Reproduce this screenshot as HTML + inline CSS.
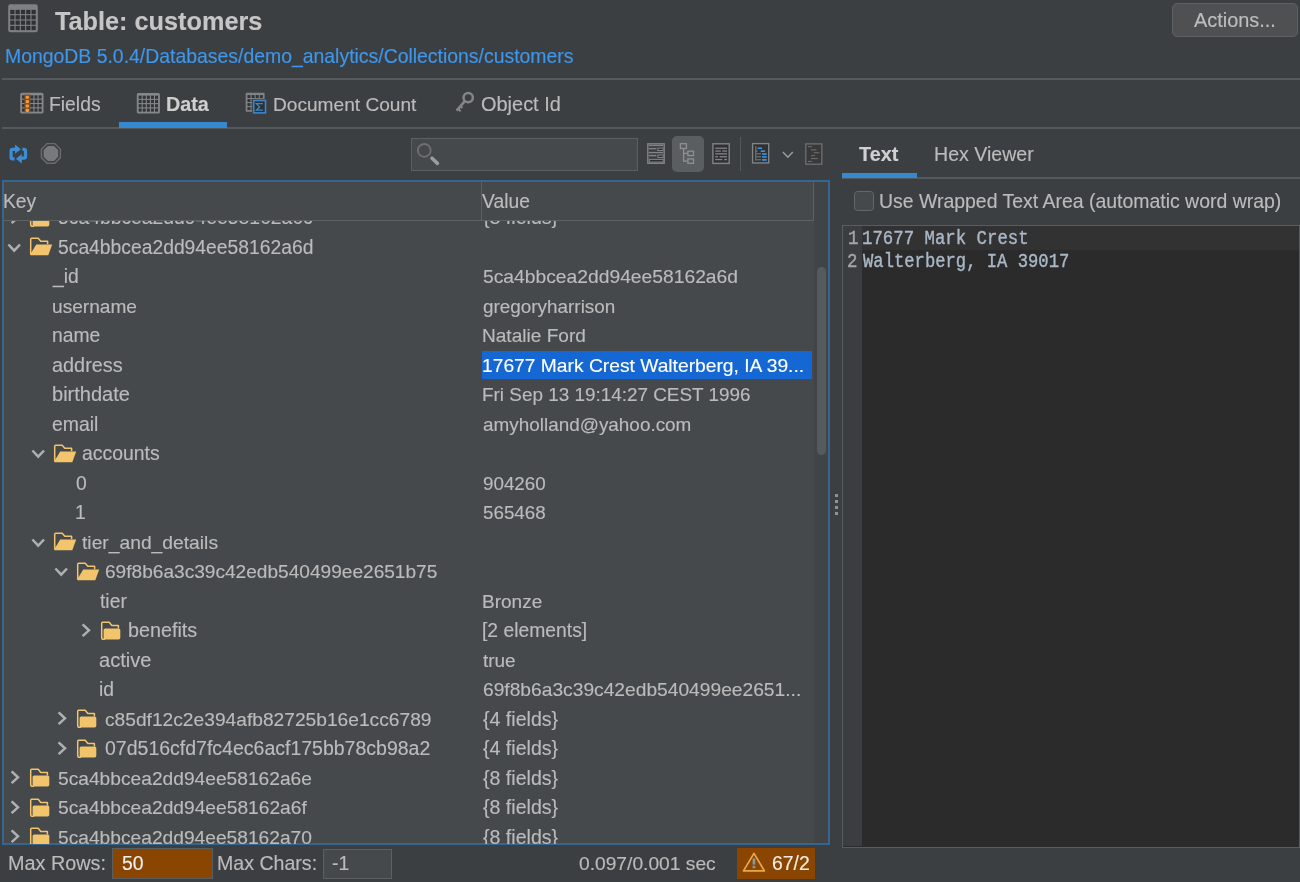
<!DOCTYPE html>
<html><head><meta charset="utf-8"><style>
html,body{margin:0;padding:0}
body{width:1300px;height:882px;overflow:hidden;background:#3c3f41;position:relative;font-family:'Liberation Sans', sans-serif}
.t{position:absolute;white-space:pre;will-change:transform;-webkit-text-stroke:0.15px currentColor}
.r{position:absolute;display:block}
</style></head><body>
<svg class="r" style="left:6px;top:2px" width="36" height="33" viewBox="6 2 36 33"><rect x="8.2" y="4.2" width="29.599999999999998" height="28.000000000000004" rx="2.2" fill="#7e8082"/><rect x="10.25" y="9.85" width="4.22" height="4.25" fill="#2f3234"/><rect x="10.25" y="15.20" width="4.22" height="4.25" fill="#2f3234"/><rect x="10.25" y="20.55" width="4.22" height="4.25" fill="#2f3234"/><rect x="10.25" y="25.90" width="4.22" height="4.25" fill="#2f3234"/><rect x="15.57" y="9.85" width="4.22" height="4.25" fill="#2f3234"/><rect x="15.57" y="15.20" width="4.22" height="4.25" fill="#2f3234"/><rect x="15.57" y="20.55" width="4.22" height="4.25" fill="#2f3234"/><rect x="15.57" y="25.90" width="4.22" height="4.25" fill="#2f3234"/><rect x="20.89" y="9.85" width="4.22" height="4.25" fill="#2f3234"/><rect x="20.89" y="15.20" width="4.22" height="4.25" fill="#2f3234"/><rect x="20.89" y="20.55" width="4.22" height="4.25" fill="#2f3234"/><rect x="20.89" y="25.90" width="4.22" height="4.25" fill="#2f3234"/><rect x="26.21" y="9.85" width="4.22" height="4.25" fill="#2f3234"/><rect x="26.21" y="15.20" width="4.22" height="4.25" fill="#2f3234"/><rect x="26.21" y="20.55" width="4.22" height="4.25" fill="#2f3234"/><rect x="26.21" y="25.90" width="4.22" height="4.25" fill="#2f3234"/><rect x="31.53" y="9.85" width="4.22" height="4.25" fill="#2f3234"/><rect x="31.53" y="15.20" width="4.22" height="4.25" fill="#2f3234"/><rect x="31.53" y="20.55" width="4.22" height="4.25" fill="#2f3234"/><rect x="31.53" y="25.90" width="4.22" height="4.25" fill="#2f3234"/></svg><div class="t" style="left:54.95px;top:9.00px;font-size:25.282px;line-height:25.282px;color:#c6c6c6;font-weight:bold;font-family:'Liberation Sans', sans-serif;">Table: customers</div><div class="t" style="left:4.95px;top:47.00px;font-size:19.423px;line-height:19.423px;color:#3d97ec;font-weight:normal;font-family:'Liberation Sans', sans-serif;">MongoDB 5.0.4/Databases/demo_analytics/Collections/customers</div><div class="r" style="left:1172.4px;top:3px;width:125.4px;height:33.6px;box-sizing:border-box;background:#4e5052;border:1.5px solid #5d6062;border-radius:5px"></div><div class="t" style="left:1194.20px;top:11.00px;font-size:19.926px;line-height:19.926px;color:#bdbdbd;font-weight:normal;font-family:'Liberation Sans', sans-serif;">Actions...</div><div class="r" style="left:2px;top:78px;width:1298px;height:2px;background:#56595c"></div><svg class="r" style="left:18px;top:90px" width="28" height="26" viewBox="18 90 28 26"><rect x="20.2" y="92.8" width="23.3" height="20.700000000000003" rx="1.6" fill="#85878a"/><rect x="22.05" y="95.33" width="3.04" height="3.26" fill="#323537"/><rect x="22.05" y="99.69" width="3.04" height="3.26" fill="#323537"/><rect x="22.05" y="104.04" width="3.04" height="3.26" fill="#323537"/><rect x="22.05" y="108.39" width="3.04" height="3.26" fill="#323537"/><rect x="26.19" y="95.33" width="3.04" height="3.26" fill="#323537"/><rect x="26.19" y="99.69" width="3.04" height="3.26" fill="#323537"/><rect x="26.19" y="104.04" width="3.04" height="3.26" fill="#323537"/><rect x="26.19" y="108.39" width="3.04" height="3.26" fill="#323537"/><rect x="30.33" y="95.33" width="3.04" height="3.26" fill="#323537"/><rect x="30.33" y="99.69" width="3.04" height="3.26" fill="#323537"/><rect x="30.33" y="104.04" width="3.04" height="3.26" fill="#323537"/><rect x="30.33" y="108.39" width="3.04" height="3.26" fill="#323537"/><rect x="34.47" y="95.33" width="3.04" height="3.26" fill="#323537"/><rect x="34.47" y="99.69" width="3.04" height="3.26" fill="#323537"/><rect x="34.47" y="104.04" width="3.04" height="3.26" fill="#323537"/><rect x="34.47" y="108.39" width="3.04" height="3.26" fill="#323537"/><rect x="38.61" y="95.33" width="3.04" height="3.26" fill="#323537"/><rect x="38.61" y="99.69" width="3.04" height="3.26" fill="#323537"/><rect x="38.61" y="104.04" width="3.04" height="3.26" fill="#323537"/><rect x="38.61" y="108.39" width="3.04" height="3.26" fill="#323537"/><rect x="24.4" y="94.6" width="5.8" height="17.6" fill="#7a4c26"/><rect x="25.65" y="95.65" width="3.3" height="3.1" rx="0.8" fill="#f6983a"/><rect x="25.65" y="100.05" width="3.3" height="3.1" rx="0.8" fill="#f6983a"/><rect x="25.65" y="104.45" width="3.3" height="3.1" rx="0.8" fill="#f6983a"/><rect x="25.65" y="108.85000000000001" width="3.3" height="3.1" rx="0.8" fill="#f6983a"/></svg><div class="t" style="left:48.95px;top:95.00px;font-size:19.355px;line-height:19.355px;color:#bbbbbb;font-weight:normal;font-family:'Liberation Sans', sans-serif;">Fields</div><svg class="r" style="left:134px;top:90px" width="28" height="26" viewBox="134 90 28 26"><rect x="136.8" y="93.1" width="23.099999999999994" height="20.400000000000006" rx="1.6" fill="#85878a"/><rect x="138.65" y="95.63" width="3.00" height="3.18" fill="#323537"/><rect x="138.65" y="99.91" width="3.00" height="3.18" fill="#323537"/><rect x="138.65" y="104.19" width="3.00" height="3.18" fill="#323537"/><rect x="138.65" y="108.47" width="3.00" height="3.18" fill="#323537"/><rect x="142.75" y="95.63" width="3.00" height="3.18" fill="#323537"/><rect x="142.75" y="99.91" width="3.00" height="3.18" fill="#323537"/><rect x="142.75" y="104.19" width="3.00" height="3.18" fill="#323537"/><rect x="142.75" y="108.47" width="3.00" height="3.18" fill="#323537"/><rect x="146.85" y="95.63" width="3.00" height="3.18" fill="#323537"/><rect x="146.85" y="99.91" width="3.00" height="3.18" fill="#323537"/><rect x="146.85" y="104.19" width="3.00" height="3.18" fill="#323537"/><rect x="146.85" y="108.47" width="3.00" height="3.18" fill="#323537"/><rect x="150.95" y="95.63" width="3.00" height="3.18" fill="#323537"/><rect x="150.95" y="99.91" width="3.00" height="3.18" fill="#323537"/><rect x="150.95" y="104.19" width="3.00" height="3.18" fill="#323537"/><rect x="150.95" y="108.47" width="3.00" height="3.18" fill="#323537"/><rect x="155.05" y="95.63" width="3.00" height="3.18" fill="#323537"/><rect x="155.05" y="99.91" width="3.00" height="3.18" fill="#323537"/><rect x="155.05" y="104.19" width="3.00" height="3.18" fill="#323537"/><rect x="155.05" y="108.47" width="3.00" height="3.18" fill="#323537"/></svg><div class="t" style="left:165.71px;top:95.00px;font-size:19.799px;line-height:19.799px;color:#cfcfcf;font-weight:bold;font-family:'Liberation Sans', sans-serif;">Data</div><svg class="r" style="left:243px;top:90px" width="27" height="27" viewBox="243 90 27 27"><rect x="245.7" y="92.8" width="18.900000000000034" height="19.0" rx="1" fill="#808284"/><rect x="247.45" y="95.07" width="3.03" height="2.92" fill="#323537"/><rect x="247.45" y="99.09" width="3.03" height="2.92" fill="#323537"/><rect x="247.45" y="103.11" width="3.03" height="2.92" fill="#323537"/><rect x="247.45" y="107.13" width="3.03" height="2.92" fill="#323537"/><rect x="251.57" y="95.07" width="3.03" height="2.92" fill="#323537"/><rect x="251.57" y="99.09" width="3.03" height="2.92" fill="#323537"/><rect x="251.57" y="103.11" width="3.03" height="2.92" fill="#323537"/><rect x="251.57" y="107.13" width="3.03" height="2.92" fill="#323537"/><rect x="255.70" y="95.07" width="3.03" height="2.92" fill="#323537"/><rect x="255.70" y="99.09" width="3.03" height="2.92" fill="#323537"/><rect x="255.70" y="103.11" width="3.03" height="2.92" fill="#323537"/><rect x="255.70" y="107.13" width="3.03" height="2.92" fill="#323537"/><rect x="259.83" y="95.07" width="3.03" height="2.92" fill="#323537"/><rect x="259.83" y="99.09" width="3.03" height="2.92" fill="#323537"/><rect x="259.83" y="103.11" width="3.03" height="2.92" fill="#323537"/><rect x="259.83" y="107.13" width="3.03" height="2.92" fill="#323537"/><rect x="252.1" y="98.9" width="15" height="15.6" fill="#3c3f41"/><rect x="253.7" y="100.5" width="11.8" height="12.4" fill="#2f3133" stroke="#3a87d0" stroke-width="1.6"/><path d="M262.8 103.6 H256.4 L259.6 106.9 L256.4 110.2 H262.8" fill="none" stroke="#3a87d0" stroke-width="1.3"/></svg><div class="t" style="left:273.07px;top:95.00px;font-size:19.122px;line-height:19.122px;color:#bbbbbb;font-weight:normal;font-family:'Liberation Sans', sans-serif;">Document Count</div><svg class="r" style="left:452px;top:90px" width="26" height="27" viewBox="452 90 26 27"><circle cx="468.2" cy="97.6" r="4.7" fill="none" stroke="#838587" stroke-width="2.5"/><path d="M464.8 101.2 L456.6 110.6" stroke="#838587" stroke-width="2.6" fill="none"/><path d="M457.6 108.2 L460.6 111.2 M460 105.6 L462.4 108" stroke="#838587" stroke-width="2.2" fill="none"/></svg><div class="t" style="left:481.20px;top:95.00px;font-size:19.970px;line-height:19.970px;color:#bbbbbb;font-weight:normal;font-family:'Liberation Sans', sans-serif;">Object Id</div><div class="r" style="left:2px;top:127px;width:1298px;height:1.6px;background:#56595c"></div><div class="r" style="left:118.6px;top:122.4px;width:108px;height:5.4px;background:#3589d1"></div><svg class="r" style="left:6px;top:141px" width="26" height="26" viewBox="6 141 26 26"><path d="M14.6 158.9 H12.7 Q11.1 158.9 11.1 157.3 V151 Q11.1 149.4 12.7 149.4 H16.2" fill="none" stroke="#3b8dd6" stroke-width="3.2"/><path d="M15.0 144.5 L20.9 149.2 L15.0 153.7 Z" fill="#3b8dd6"/><path d="M22.4 149.3 H23.9 Q25.5 149.3 25.5 150.9 V156.6 Q25.5 158.2 23.9 158.2 H20.5" fill="none" stroke="#3b8dd6" stroke-width="3.2"/><path d="M21.8 154.1 L15.9 158.7 L21.8 163.5 Z" fill="#3b8dd6"/></svg><svg class="r" style="left:38px;top:140px" width="26" height="26" viewBox="38 140 26 26"><polygon points="47,143.6 54.8,143.6 60.4,149.2 60.4,157.6 54.8,163.2 47,163.2 41.4,157.6 41.4,149.2" fill="none" stroke="#6a6c6e" stroke-width="1.4"/><polygon points="47.8,145.9 54,145.9 58.2,150.1 58.2,156.7 54,160.9 47.8,160.9 43.6,156.7 43.6,150.1" fill="#77797b"/></svg><div class="r" style="left:411.2px;top:137.5px;width:227px;height:33.2px;box-sizing:border-box;background:#45494c;border:1.6px solid #5c5f61"></div><svg class="r" style="left:412px;top:139px" width="30" height="30" viewBox="412 139 30 30"><circle cx="424.25" cy="150.4" r="6.4" fill="none" stroke="#6e7072" stroke-width="1.8"/><path d="M432 158.2 L437.4 163.4" stroke="#9a9c9e" stroke-width="3.6" stroke-linecap="round"/></svg><svg class="r" style="left:644px;top:140px" width="24" height="27" viewBox="644 140 24 27"><rect x="647.8" y="143.8" width="16.4" height="19.5" fill="none" stroke="#818385" stroke-width="1.4"/><rect x="648.8" y="144.8" width="14.4" height="1.3" fill="#818385"/><rect x="648.8" y="147.9" width="7.6" height="1.4" fill="#818385"/><rect x="657.9" y="148.1" width="5.3" height="2.4" fill="#2c2e30" stroke="#818385" stroke-width="1"/><rect x="648.8" y="151.9" width="14.4" height="1.4" fill="#818385"/><rect x="648.8" y="154.9" width="7.6" height="1.4" fill="#818385"/><rect x="657.9" y="155.1" width="5.3" height="2.4" fill="#2c2e30" stroke="#818385" stroke-width="1"/><rect x="649.3" y="159.4" width="13.9" height="2.6" fill="#2c2e30" stroke="#818385" stroke-width="1"/></svg><div class="r" style="left:672px;top:136px;width:32.3px;height:36.3px;background:#5b5e61;border-radius:5px"></div><svg class="r" style="left:676px;top:140px" width="22" height="27" viewBox="676 140 22 27"><g fill="none" stroke="#8e9092" stroke-width="1.3"><rect x="680.4" y="143.7" width="6" height="4.8"/><rect x="687.9" y="151.2" width="5.6" height="4.4"/><rect x="687.9" y="158.9" width="5.6" height="4.4"/><path d="M683.6 148.5 V161.1 H687.9 M683.6 153.4 H687.9"/></g></svg><svg class="r" style="left:709px;top:140px" width="24" height="27" viewBox="709 140 24 27"><rect x="712.9" y="143.8" width="16.3" height="19.6" fill="#2f3133" stroke="#818385" stroke-width="1.4"/><g fill="#818385"><rect x="715.2" y="147.6" width="11.8" height="1.3"/><rect x="715.2" y="150.4" width="5.6" height="1.3"/><rect x="722.3" y="150.4" width="4.7" height="1.3"/><rect x="715.2" y="153.2" width="11.8" height="1.3"/><rect x="715.2" y="156.1" width="2.8" height="1.3"/><rect x="719.6" y="156.1" width="7.4" height="1.3"/><rect x="715.2" y="158.9" width="7" height="1.3"/><rect x="724.2" y="158.9" width="2.8" height="1.3"/></g></svg><div class="r" style="left:740.2px;top:137px;width:1.3px;height:34px;background:#55585a"></div><svg class="r" style="left:748px;top:140px" width="24" height="27" viewBox="748 140 24 27"><rect x="752.6" y="143.6" width="16.1" height="19.3" fill="#2f3133" stroke="#818385" stroke-width="1.4"/><path d="M755.8 146.1 V160.7 M755.8 151 H757.6 M756.4 153.8 H761 M756.4 156.8 H761 M756.4 159.8 H761" stroke="#818385" stroke-width="1.0" fill="none"/><g fill="#3d8fd8"><rect x="757.6" y="147.4" width="4.5" height="1.6"/><rect x="760.7" y="150.3" width="4.4" height="1.7"/><rect x="762" y="153.2" width="4.7" height="1.7"/><rect x="762" y="156.1" width="4.7" height="1.7"/><rect x="762" y="159" width="4.7" height="1.8"/></g></svg><svg class="r" style="left:780px;top:148px" width="16" height="12" viewBox="780 148 16 12"><path d="M782.9 152 L787.85 157.2 L792.8 152" fill="none" stroke="#97999b" stroke-width="1.6"/></svg><svg class="r" style="left:802px;top:140px" width="24" height="28" viewBox="802 140 24 28"><rect x="805.8" y="143.9" width="16" height="20.3" fill="#37393b" stroke="#6b6d6f" stroke-width="1.4"/><g fill="#6b6d6f"><rect x="808" y="146.1" width="3.9" height="1.1"/><rect x="811" y="149.3" width="5.4" height="1.1"/><rect x="813.8" y="152.2" width="5.5" height="1.1"/><rect x="811" y="155.1" width="3.8" height="1.1"/><rect x="811" y="158" width="6.7" height="1.1"/><rect x="808" y="160.9" width="3.9" height="1.1"/></g></svg><div class="r" style="left:2px;top:179.8px;width:828.2px;height:665px;box-sizing:border-box;background:#45494c;border:2px solid #386590"></div><div class="r" style="left:814px;top:181.8px;width:14px;height:661.2px;background:#404446"></div><div class="r" style="left:816.5px;top:267px;width:9px;height:188px;background:#565a5d;border-radius:4.5px"></div><div class="r" style="left:3.5px;top:181.5px;width:810.5px;height:662.5px;overflow:hidden"><div class="t" style="left:54.53px;top:26.50px;font-size:19.338px;line-height:19.338px;color:#bbbbbb;font-weight:normal;font-family:'Liberation Sans', sans-serif;">5ca4bbcea2dd94ee58162a6c</div><svg class="r" style="left:6.30px;top:28.00px" width="10" height="15" viewBox="0 0 10 15"><path d="M1.6 1.4 L8 7.3 L1.6 13.2" fill="none" stroke="#aeb0b2" stroke-width="2.5"/></svg><svg class="r" style="left:25.70px;top:26.30px" width="21" height="19" viewBox="0 0 21 19">
<path d="M1.7 17 V2.2 Q1.7 1.3 2.6 1.3 H9.2 L11.8 4.5 H18.4 V7.5" fill="none" stroke="#f2c46c" stroke-width="1.5" stroke-linejoin="round"/>
<rect x="3.6" y="7.4" width="16.7" height="11" rx="1.6" fill="#f2c46c"/>
<path d="M1.7 16.8 Q1.7 18.3 3 18.3 H5" fill="none" stroke="#f2c46c" stroke-width="1.5"/></svg><div class="t" style="left:479.90px;top:26.50px;font-size:19.594px;line-height:19.594px;color:#bbbbbb;font-weight:normal;font-family:'Liberation Sans', sans-serif;">{8 fields}</div><div class="t" style="left:54.53px;top:56.50px;font-size:19.309px;line-height:19.309px;color:#bbbbbb;font-weight:normal;font-family:'Liberation Sans', sans-serif;">5ca4bbcea2dd94ee58162a6d</div><svg class="r" style="left:3.70px;top:61.20px" width="15" height="10" viewBox="0 0 15 10"><path d="M1.4 1.5 L7.2 7.6 L13 1.5" fill="none" stroke="#aeb0b2" stroke-width="2.5"/></svg><svg class="r" style="left:25.70px;top:55.80px" width="24" height="19" viewBox="0 0 24 19">
<path d="M1.7 17.5 V2.2 Q1.7 1.3 2.6 1.3 H9.2 L11.8 4.3 H18.6 V7.2" fill="none" stroke="#f2c46c" stroke-width="1.5" stroke-linejoin="round"/>
<path d="M8 7.6 H23.2 L19.3 18.3 H1.5 Z" fill="#f2c46c"/>
<path d="M1.7 17.8 L8 7.6" stroke="#f2c46c" stroke-width="1.4"/></svg><div class="t" style="left:49.59px;top:85.50px;font-size:19.333px;line-height:19.333px;color:#bbbbbb;font-weight:normal;font-family:'Liberation Sans', sans-serif;">_id</div><div class="t" style="left:479.33px;top:85.50px;font-size:19.278px;line-height:19.278px;color:#bbbbbb;font-weight:normal;font-family:'Liberation Sans', sans-serif;">5ca4bbcea2dd94ee58162a6d</div><div class="t" style="left:48.05px;top:115.50px;font-size:19.124px;line-height:19.124px;color:#bbbbbb;font-weight:normal;font-family:'Liberation Sans', sans-serif;">username</div><div class="t" style="left:479.34px;top:116.50px;font-size:18.908px;line-height:18.908px;color:#bbbbbb;font-weight:normal;font-family:'Liberation Sans', sans-serif;">gregoryharrison</div><div class="t" style="left:48.04px;top:144.50px;font-size:19.332px;line-height:19.332px;color:#bbbbbb;font-weight:normal;font-family:'Liberation Sans', sans-serif;">name</div><div class="t" style="left:478.57px;top:144.50px;font-size:19.075px;line-height:19.075px;color:#bbbbbb;font-weight:normal;font-family:'Liberation Sans', sans-serif;">Natalie Ford</div><div class="r" style="left:478.30px;top:169.50px;width:330.7px;height:28px;background:#1567d3"></div><div class="t" style="left:48.41px;top:174.50px;font-size:19.870px;line-height:19.870px;color:#bbbbbb;font-weight:normal;font-family:'Liberation Sans', sans-serif;">address</div><div class="t" style="left:478.75px;top:174.50px;font-size:19.249px;line-height:19.249px;color:#ffffff;font-weight:normal;font-family:'Liberation Sans', sans-serif;">17677 Mark Crest Walterberg, IA 39...</div><div class="t" style="left:48.00px;top:202.50px;font-size:20.050px;line-height:20.050px;color:#bbbbbb;font-weight:normal;font-family:'Liberation Sans', sans-serif;">birthdate</div><div class="t" style="left:478.59px;top:204.50px;font-size:18.909px;line-height:18.909px;color:#bbbbbb;font-weight:normal;font-family:'Liberation Sans', sans-serif;">Fri Sep 13 19:14:27 CEST 1996</div><div class="t" style="left:48.42px;top:233.50px;font-size:19.410px;line-height:19.410px;color:#bbbbbb;font-weight:normal;font-family:'Liberation Sans', sans-serif;">email</div><div class="t" style="left:479.34px;top:234.50px;font-size:18.923px;line-height:18.923px;color:#bbbbbb;font-weight:normal;font-family:'Liberation Sans', sans-serif;">amyholland@yahoo.com</div><div class="t" style="left:78.12px;top:262.50px;font-size:19.428px;line-height:19.428px;color:#bbbbbb;font-weight:normal;font-family:'Liberation Sans', sans-serif;">accounts</div><svg class="r" style="left:27.30px;top:267.70px" width="15" height="10" viewBox="0 0 15 10"><path d="M1.4 1.5 L7.2 7.6 L13 1.5" fill="none" stroke="#aeb0b2" stroke-width="2.5"/></svg><svg class="r" style="left:49.30px;top:262.30px" width="24" height="19" viewBox="0 0 24 19">
<path d="M1.7 17.5 V2.2 Q1.7 1.3 2.6 1.3 H9.2 L11.8 4.3 H18.6 V7.2" fill="none" stroke="#f2c46c" stroke-width="1.5" stroke-linejoin="round"/>
<path d="M8 7.6 H23.2 L19.3 18.3 H1.5 Z" fill="#f2c46c"/>
<path d="M1.7 17.8 L8 7.6" stroke="#f2c46c" stroke-width="1.4"/></svg><div class="t" style="left:72.22px;top:292.50px;font-size:19.309px;line-height:19.309px;color:#bbbbbb;font-weight:normal;font-family:'Liberation Sans', sans-serif;">0</div><div class="t" style="left:479.35px;top:293.50px;font-size:18.799px;line-height:18.799px;color:#bbbbbb;font-weight:normal;font-family:'Liberation Sans', sans-serif;">904260</div><div class="t" style="left:71.45px;top:321.50px;font-size:19.309px;line-height:19.309px;color:#bbbbbb;font-weight:normal;font-family:'Liberation Sans', sans-serif;">1</div><div class="t" style="left:479.35px;top:322.50px;font-size:18.799px;line-height:18.799px;color:#bbbbbb;font-weight:normal;font-family:'Liberation Sans', sans-serif;">565468</div><div class="t" style="left:78.71px;top:351.50px;font-size:19.272px;line-height:19.272px;color:#bbbbbb;font-weight:normal;font-family:'Liberation Sans', sans-serif;">tier_and_details</div><svg class="r" style="left:27.30px;top:356.20px" width="15" height="10" viewBox="0 0 15 10"><path d="M1.4 1.5 L7.2 7.6 L13 1.5" fill="none" stroke="#aeb0b2" stroke-width="2.5"/></svg><svg class="r" style="left:49.30px;top:350.80px" width="24" height="19" viewBox="0 0 24 19">
<path d="M1.7 17.5 V2.2 Q1.7 1.3 2.6 1.3 H9.2 L11.8 4.3 H18.6 V7.2" fill="none" stroke="#f2c46c" stroke-width="1.5" stroke-linejoin="round"/>
<path d="M8 7.6 H23.2 L19.3 18.3 H1.5 Z" fill="#f2c46c"/>
<path d="M1.7 17.8 L8 7.6" stroke="#f2c46c" stroke-width="1.4"/></svg><div class="t" style="left:101.54px;top:380.50px;font-size:19.105px;line-height:19.105px;color:#bbbbbb;font-weight:normal;font-family:'Liberation Sans', sans-serif;">69f8b6a3c39c42edb540499ee2651b75</div><svg class="r" style="left:50.90px;top:385.70px" width="15" height="10" viewBox="0 0 15 10"><path d="M1.4 1.5 L7.2 7.6 L13 1.5" fill="none" stroke="#aeb0b2" stroke-width="2.5"/></svg><svg class="r" style="left:72.90px;top:380.30px" width="24" height="19" viewBox="0 0 24 19">
<path d="M1.7 17.5 V2.2 Q1.7 1.3 2.6 1.3 H9.2 L11.8 4.3 H18.6 V7.2" fill="none" stroke="#f2c46c" stroke-width="1.5" stroke-linejoin="round"/>
<path d="M8 7.6 H23.2 L19.3 18.3 H1.5 Z" fill="#f2c46c"/>
<path d="M1.7 17.8 L8 7.6" stroke="#f2c46c" stroke-width="1.4"/></svg><div class="t" style="left:96.21px;top:410.50px;font-size:19.324px;line-height:19.324px;color:#bbbbbb;font-weight:normal;font-family:'Liberation Sans', sans-serif;">tier</div><div class="t" style="left:478.58px;top:410.50px;font-size:19.035px;line-height:19.035px;color:#bbbbbb;font-weight:normal;font-family:'Liberation Sans', sans-serif;">Bronze</div><div class="t" style="left:124.91px;top:439.50px;font-size:19.781px;line-height:19.781px;color:#bbbbbb;font-weight:normal;font-family:'Liberation Sans', sans-serif;">benefits</div><svg class="r" style="left:77.10px;top:441.00px" width="10" height="15" viewBox="0 0 10 15"><path d="M1.6 1.4 L8 7.3 L1.6 13.2" fill="none" stroke="#aeb0b2" stroke-width="2.5"/></svg><svg class="r" style="left:96.50px;top:439.30px" width="21" height="19" viewBox="0 0 21 19">
<path d="M1.7 17 V2.2 Q1.7 1.3 2.6 1.3 H9.2 L11.8 4.5 H18.4 V7.5" fill="none" stroke="#f2c46c" stroke-width="1.5" stroke-linejoin="round"/>
<rect x="3.6" y="7.4" width="16.7" height="11" rx="1.6" fill="#f2c46c"/>
<path d="M1.7 16.8 Q1.7 18.3 3 18.3 H5" fill="none" stroke="#f2c46c" stroke-width="1.5"/></svg><div class="t" style="left:478.75px;top:439.50px;font-size:19.324px;line-height:19.324px;color:#bbbbbb;font-weight:normal;font-family:'Liberation Sans', sans-serif;">[2 elements]</div><div class="t" style="left:95.60px;top:468.50px;font-size:20.070px;line-height:20.070px;color:#bbbbbb;font-weight:normal;font-family:'Liberation Sans', sans-serif;">active</div><div class="t" style="left:479.91px;top:470.50px;font-size:18.963px;line-height:18.963px;color:#bbbbbb;font-weight:normal;font-family:'Liberation Sans', sans-serif;">true</div><div class="t" style="left:95.24px;top:498.50px;font-size:19.309px;line-height:19.309px;color:#bbbbbb;font-weight:normal;font-family:'Liberation Sans', sans-serif;">id</div><div class="t" style="left:479.14px;top:498.50px;font-size:19.211px;line-height:19.211px;color:#bbbbbb;font-weight:normal;font-family:'Liberation Sans', sans-serif;">69f8b6a3c39c42edb540499ee2651...</div><div class="t" style="left:101.73px;top:528.50px;font-size:19.197px;line-height:19.197px;color:#bbbbbb;font-weight:normal;font-family:'Liberation Sans', sans-serif;">c85df12c2e394afb82725b16e1cc6789</div><svg class="r" style="left:53.50px;top:529.50px" width="10" height="15" viewBox="0 0 10 15"><path d="M1.6 1.4 L8 7.3 L1.6 13.2" fill="none" stroke="#aeb0b2" stroke-width="2.5"/></svg><svg class="r" style="left:72.90px;top:527.80px" width="21" height="19" viewBox="0 0 21 19">
<path d="M1.7 17 V2.2 Q1.7 1.3 2.6 1.3 H9.2 L11.8 4.5 H18.4 V7.5" fill="none" stroke="#f2c46c" stroke-width="1.5" stroke-linejoin="round"/>
<rect x="3.6" y="7.4" width="16.7" height="11" rx="1.6" fill="#f2c46c"/>
<path d="M1.7 16.8 Q1.7 18.3 3 18.3 H5" fill="none" stroke="#f2c46c" stroke-width="1.5"/></svg><div class="t" style="left:479.90px;top:528.50px;font-size:19.594px;line-height:19.594px;color:#bbbbbb;font-weight:normal;font-family:'Liberation Sans', sans-serif;">{4 fields}</div><div class="t" style="left:101.91px;top:557.50px;font-size:19.500px;line-height:19.500px;color:#bbbbbb;font-weight:normal;font-family:'Liberation Sans', sans-serif;">07d516cfd7fc4ec6acf175bb78cb98a2</div><svg class="r" style="left:53.50px;top:559.00px" width="10" height="15" viewBox="0 0 10 15"><path d="M1.6 1.4 L8 7.3 L1.6 13.2" fill="none" stroke="#aeb0b2" stroke-width="2.5"/></svg><svg class="r" style="left:72.90px;top:557.30px" width="21" height="19" viewBox="0 0 21 19">
<path d="M1.7 17 V2.2 Q1.7 1.3 2.6 1.3 H9.2 L11.8 4.5 H18.4 V7.5" fill="none" stroke="#f2c46c" stroke-width="1.5" stroke-linejoin="round"/>
<rect x="3.6" y="7.4" width="16.7" height="11" rx="1.6" fill="#f2c46c"/>
<path d="M1.7 16.8 Q1.7 18.3 3 18.3 H5" fill="none" stroke="#f2c46c" stroke-width="1.5"/></svg><div class="t" style="left:479.90px;top:557.50px;font-size:19.594px;line-height:19.594px;color:#bbbbbb;font-weight:normal;font-family:'Liberation Sans', sans-serif;">{4 fields}</div><div class="t" style="left:54.53px;top:587.50px;font-size:19.196px;line-height:19.196px;color:#bbbbbb;font-weight:normal;font-family:'Liberation Sans', sans-serif;">5ca4bbcea2dd94ee58162a6e</div><svg class="r" style="left:6.30px;top:588.50px" width="10" height="15" viewBox="0 0 10 15"><path d="M1.6 1.4 L8 7.3 L1.6 13.2" fill="none" stroke="#aeb0b2" stroke-width="2.5"/></svg><svg class="r" style="left:25.70px;top:586.80px" width="21" height="19" viewBox="0 0 21 19">
<path d="M1.7 17 V2.2 Q1.7 1.3 2.6 1.3 H9.2 L11.8 4.5 H18.4 V7.5" fill="none" stroke="#f2c46c" stroke-width="1.5" stroke-linejoin="round"/>
<rect x="3.6" y="7.4" width="16.7" height="11" rx="1.6" fill="#f2c46c"/>
<path d="M1.7 16.8 Q1.7 18.3 3 18.3 H5" fill="none" stroke="#f2c46c" stroke-width="1.5"/></svg><div class="t" style="left:479.90px;top:587.50px;font-size:19.594px;line-height:19.594px;color:#bbbbbb;font-weight:normal;font-family:'Liberation Sans', sans-serif;">{8 fields}</div><div class="t" style="left:54.53px;top:616.50px;font-size:19.219px;line-height:19.219px;color:#bbbbbb;font-weight:normal;font-family:'Liberation Sans', sans-serif;">5ca4bbcea2dd94ee58162a6f</div><svg class="r" style="left:6.30px;top:618.00px" width="10" height="15" viewBox="0 0 10 15"><path d="M1.6 1.4 L8 7.3 L1.6 13.2" fill="none" stroke="#aeb0b2" stroke-width="2.5"/></svg><svg class="r" style="left:25.70px;top:616.30px" width="21" height="19" viewBox="0 0 21 19">
<path d="M1.7 17 V2.2 Q1.7 1.3 2.6 1.3 H9.2 L11.8 4.5 H18.4 V7.5" fill="none" stroke="#f2c46c" stroke-width="1.5" stroke-linejoin="round"/>
<rect x="3.6" y="7.4" width="16.7" height="11" rx="1.6" fill="#f2c46c"/>
<path d="M1.7 16.8 Q1.7 18.3 3 18.3 H5" fill="none" stroke="#f2c46c" stroke-width="1.5"/></svg><div class="t" style="left:479.90px;top:616.50px;font-size:19.594px;line-height:19.594px;color:#bbbbbb;font-weight:normal;font-family:'Liberation Sans', sans-serif;">{8 fields}</div><div class="t" style="left:54.53px;top:646.50px;font-size:19.196px;line-height:19.196px;color:#bbbbbb;font-weight:normal;font-family:'Liberation Sans', sans-serif;">5ca4bbcea2dd94ee58162a70</div><svg class="r" style="left:6.30px;top:647.50px" width="10" height="15" viewBox="0 0 10 15"><path d="M1.6 1.4 L8 7.3 L1.6 13.2" fill="none" stroke="#aeb0b2" stroke-width="2.5"/></svg><svg class="r" style="left:25.70px;top:645.80px" width="21" height="19" viewBox="0 0 21 19">
<path d="M1.7 17 V2.2 Q1.7 1.3 2.6 1.3 H9.2 L11.8 4.5 H18.4 V7.5" fill="none" stroke="#f2c46c" stroke-width="1.5" stroke-linejoin="round"/>
<rect x="3.6" y="7.4" width="16.7" height="11" rx="1.6" fill="#f2c46c"/>
<path d="M1.7 16.8 Q1.7 18.3 3 18.3 H5" fill="none" stroke="#f2c46c" stroke-width="1.5"/></svg><div class="t" style="left:479.90px;top:646.50px;font-size:19.594px;line-height:19.594px;color:#bbbbbb;font-weight:normal;font-family:'Liberation Sans', sans-serif;">{8 fields}</div><div class="r" style="left:0.00px;top:0.00px;width:810.5px;height:39px;background:#45494c"></div><div class="r" style="left:0.00px;top:38.30px;width:810.5px;height:1.4px;background:#5e6163"></div><div class="r" style="left:477.00px;top:0.00px;width:1.3px;height:39px;background:#5e6163"></div><div class="r" style="left:809.20px;top:0.00px;width:1.3px;height:39px;background:#5e6163"></div><div class="t" style="left:-0.54px;top:10.50px;font-size:19.309px;line-height:19.309px;color:#bbbbbb;font-weight:normal;font-family:'Liberation Sans', sans-serif;">Key</div><div class="t" style="left:478.50px;top:10.50px;font-size:19.309px;line-height:19.309px;color:#bbbbbb;font-weight:normal;font-family:'Liberation Sans', sans-serif;">Value</div></div><div class="r" style="left:834.5px;top:494.2px;width:3px;height:3px;background:#8f9193"></div><div class="r" style="left:834.5px;top:500.15px;width:3px;height:3px;background:#8f9193"></div><div class="r" style="left:834.5px;top:506.09999999999997px;width:3px;height:3px;background:#8f9193"></div><div class="r" style="left:834.5px;top:512.05px;width:3px;height:3px;background:#8f9193"></div><div class="t" style="left:859.30px;top:145.00px;font-size:19.859px;line-height:19.859px;color:#d0d0d0;font-weight:bold;font-family:'Liberation Sans', sans-serif;">Text</div><div class="t" style="left:933.63px;top:145.00px;font-size:19.573px;line-height:19.573px;color:#bbbbbb;font-weight:normal;font-family:'Liberation Sans', sans-serif;">Hex Viewer</div><div class="r" style="left:841.5px;top:177px;width:458.5px;height:1.5px;background:#56595c"></div><div class="r" style="left:841.5px;top:172.8px;width:75.5px;height:5.4px;background:#3589d1"></div><div class="r" style="left:854px;top:190.5px;width:20px;height:20px;box-sizing:border-box;background:#46494b;border:1.4px solid #65686a;border-radius:3.5px"></div><div class="t" style="left:879.44px;top:192.00px;font-size:19.458px;line-height:19.458px;color:#bbbbbb;font-weight:normal;font-family:'Liberation Sans', sans-serif;">Use Wrapped Text Area (automatic word wrap)</div><div class="r" style="left:842px;top:224.5px;width:458px;height:623px;box-sizing:border-box;background:#2b2b2b;border:1.3px solid #5a5d5f"></div><div class="r" style="left:843.3px;top:225.8px;width:19px;height:620px;background:#3b3e41"></div><div class="r" style="left:862.3px;top:226.4px;width:436.4px;height:23.6px;background:#323232"></div><div class="t" style="left:847.78px;top:231.00px;font-size:17.400px;line-height:17.400px;color:#a4a6a8;font-weight:normal;font-family:'Liberation Mono', monospace;transform:scaleY(1.13);transform-origin:0 85%;-webkit-text-stroke:0.35px currentColor;">1</div><div class="t" style="left:847.38px;top:254.00px;font-size:17.400px;line-height:17.400px;color:#a4a6a8;font-weight:normal;font-family:'Liberation Mono', monospace;transform:scaleY(1.13);transform-origin:0 85%;-webkit-text-stroke:0.35px currentColor;">2</div><div class="t" style="left:862.08px;top:231.00px;font-size:17.378px;line-height:17.378px;color:#a9b7c6;font-weight:normal;font-family:'Liberation Mono', monospace;transform:scaleY(1.13);transform-origin:0 85%;-webkit-text-stroke:0.35px currentColor;">17677 Mark Crest</div><div class="t" style="left:863.30px;top:254.00px;font-size:17.198px;line-height:17.198px;color:#a9b7c6;font-weight:normal;font-family:'Liberation Mono', monospace;transform:scaleY(1.13);transform-origin:0 85%;-webkit-text-stroke:0.35px currentColor;">Walterberg, IA 39017</div><div class="t" style="left:7.62px;top:854.00px;font-size:19.801px;line-height:19.801px;color:#bbbbbb;font-weight:normal;font-family:'Liberation Sans', sans-serif;">Max Rows:</div><div class="r" style="left:111.5px;top:848.3px;width:101.5px;height:30.4px;box-sizing:border-box;background:#8a4500;border:1.4px solid #5b5e60"></div><div class="t" style="left:121.52px;top:854.00px;font-size:19.400px;line-height:19.400px;color:#f0f0f0;font-weight:normal;font-family:'Liberation Sans', sans-serif;">50</div><div class="t" style="left:216.93px;top:854.00px;font-size:19.598px;line-height:19.598px;color:#bbbbbb;font-weight:normal;font-family:'Liberation Sans', sans-serif;">Max Chars:</div><div class="r" style="left:322.5px;top:848.5px;width:69.3px;height:30px;box-sizing:border-box;background:#45494c;border:1.2px solid #5d6062"></div><div class="t" style="left:332.22px;top:854.00px;font-size:19.400px;line-height:19.400px;color:#bbbbbb;font-weight:normal;font-family:'Liberation Sans', sans-serif;">-1</div><div class="t" style="left:579.12px;top:854.00px;font-size:19.203px;line-height:19.203px;color:#bbbbbb;font-weight:normal;font-family:'Liberation Sans', sans-serif;">0.097/0.001 sec</div><div class="r" style="left:737px;top:848.1px;width:78px;height:30.8px;background:#8a4500"></div><svg class="r" style="left:738px;top:849px" width="30" height="28" viewBox="738 849 30 28"><path d="M753.95 853.4 L764.4 870.9 H743.5 Z" fill="none" stroke="#eea747" stroke-width="1.7" stroke-linejoin="round"/><rect x="752.6" y="858.4" width="2.7" height="6.2" fill="#8c959c"/><rect x="752.6" y="865.8" width="2.7" height="2.5" fill="#8c959c"/></svg><div class="t" style="left:771.93px;top:854.00px;font-size:19.404px;line-height:19.404px;color:#f3ece4;font-weight:normal;font-family:'Liberation Sans', sans-serif;">67/2</div>
</body></html>
